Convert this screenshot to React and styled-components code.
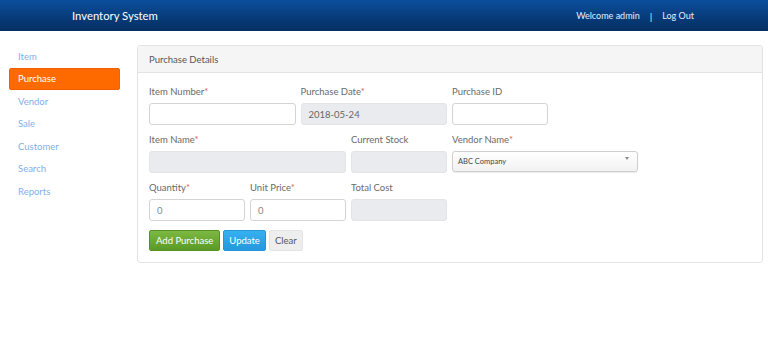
import React from "react";
import styled, { createGlobalStyle } from "styled-components";

const Global = createGlobalStyle`
  html, body { margin: 0; padding: 0; background: #fff; }
  body { font-family: Lato, "Open Sans", sans-serif; color: #555; }
  * { box-sizing: border-box; }
`;

const Header = styled.div`
  height: 31px;
  background: linear-gradient(to bottom, #0b4f9d 0%, #073a78 60%, #062f62 100%);
  display: flex;
  align-items: center;
  justify-content: space-between;
  padding: 0 74px 0 72px;
  color: #fff;
`;
const Brand = styled.div`
  font-size: 11.3px;
`;
const UserBar = styled.div`
  display: flex;
  align-items: center;
  gap: 10px;
  font-size: 9px;
  color: #e6eefa;
`;
const Sep = styled.span`
  font-size: 10px;
`;

const Body = styled.div`
  display: flex;
  padding: 14px 5px 0 9px;
  gap: 17px;
`;
const Side = styled.div`
  width: 111px;
  display: flex;
  flex-direction: column;
`;
const NavItem = styled.div`
  height: 22.5px;
  display: flex;
  align-items: center;
  padding-left: 8px;
  font-size: 9.5px;
  border-radius: 2px;
  color: ${p => (p.active ? "#fff" : "#7fb0ea")};
  background: ${p => (p.active ? "#ff6a00" : "transparent")};
  border: 1px solid ${p => (p.active ? "#f06000" : "transparent")};
`;

const Panel = styled.div`
  flex: 1;
  border: 1px solid #e3e3e3;
  border-radius: 3px;
  height: 218px;
`;
const PanelHead = styled.div`
  height: 27px;
  background: #f5f5f5;
  border-bottom: 1px solid #e3e3e3;
  display: flex;
  align-items: center;
  padding-left: 11px;
  font-size: 9.5px;
  color: #555;
`;
const PanelBody = styled.div`
  padding: 14px 11px 0 11px;
`;
const Grid = styled.div`
  display: grid;
  grid-template-columns: repeat(12, 45.5px);
  column-gap: 5px;
  row-gap: 10px;
`;
const Field = styled.div`
  grid-column: span ${p => p.span};
  display: flex;
  flex-direction: column;
`;
const Label = styled.div`
  font-size: 9.5px;
  color: #6a6a6a;
  height: 10px;
  line-height: 10px;
  margin-bottom: 6px;
`;
const Req = styled.span`
  color: #e0605a;
`;
const Input = styled.div`
  height: 22px;
  width: 100%;
  border: 1px solid ${p => (p.disabled ? "#e2e4e7" : "#d4d4d4")};
  border-radius: 3px;
  background: ${p => (p.disabled ? "#e9ebee" : "#fff")};
  font-size: 9.5px;
  color: ${p => (p.disabled ? "#666" : "#888")};
  display: flex;
  align-items: center;
  padding-left: 7px;
`;
const Select = styled.div`
  height: 21px;
  width: 186px;
  border: 1px solid #cfcfcf;
  border-radius: 3px;
  background: linear-gradient(to bottom, #fff, #f2f2f2);
  box-shadow: 0 1px 1px rgba(0, 0, 0, 0.08);
  font-size: 7.5px;
  color: #444;
  display: flex;
  align-items: center;
  justify-content: space-between;
  padding: 0 8px 0 5px;
`;
const Caret = styled.span`
  width: 0;
  height: 0;
  border-left: 2px solid transparent;
  border-right: 2px solid transparent;
  border-top: 3px solid #888;
  margin-top: -6px;
`;
const Actions = styled.div`
  display: flex;
  gap: 3px;
  margin-top: 9px;
`;
const Button = styled.div`
  height: 21px;
  padding: 0 ${p => p.px}px;
  border-radius: 2px;
  display: flex;
  align-items: center;
  font-size: 9.5px;
  color: ${p => (p.kind === "default" ? "#555" : "#fff")};
  background: ${p =>
    p.kind === "success"
      ? "linear-gradient(to bottom, #7cb843, #5a9a26)"
      : p.kind === "info"
      ? "linear-gradient(to bottom, #36b0ef, #2498dd)"
      : "#eeeeee"};
  border: 1px solid
    ${p => (p.kind === "success" ? "#55921f" : p.kind === "info" ? "#2395d8" : "#e4e4e4")};
`;

const nav = ["Item", "Purchase", "Vendor", "Sale", "Customer", "Search", "Reports"];

const L = ({ text, req }) => (
  <Label>
    {text}
    {req && <Req>*</Req>}
  </Label>
);

export default function App() {
  return (
    <>
      <Global />
      <Header>
        <Brand>Inventory System</Brand>
        <UserBar>
          <span>Welcome admin</span>
          <Sep>|</Sep>
          <span>Log Out</span>
        </UserBar>
      </Header>
      <Body>
        <Side>
          {nav.map(n => (
            <NavItem key={n} active={n === "Purchase"}>
              {n}
            </NavItem>
          ))}
        </Side>
        <Panel>
          <PanelHead>Purchase Details</PanelHead>
          <PanelBody>
            <Grid>
              <Field span={3}>
                <L text="Item Number" req />
                <Input />
              </Field>
              <Field span={3}>
                <L text="Purchase Date" req />
                <Input disabled>2018-05-24</Input>
              </Field>
              <Field span={2}>
                <L text="Purchase ID" />
                <Input />
              </Field>
              <Field span={4} />

              <Field span={4}>
                <L text="Item Name" req />
                <Input disabled />
              </Field>
              <Field span={2}>
                <L text="Current Stock" />
                <Input disabled />
              </Field>
              <Field span={4}>
                <L text="Vendor Name" req />
                <Select>
                  <span>ABC Company</span>
                  <Caret />
                </Select>
              </Field>
              <Field span={2} />

              <Field span={2}>
                <L text="Quantity" req />
                <Input>0</Input>
              </Field>
              <Field span={2}>
                <L text="Unit Price" req />
                <Input>0</Input>
              </Field>
              <Field span={2}>
                <L text="Total Cost" />
                <Input disabled />
              </Field>
            </Grid>
            <Actions>
              <Button kind="success" px={6}>Add Purchase</Button>
              <Button kind="info" px={5}>Update</Button>
              <Button kind="default" px={5}>Clear</Button>
            </Actions>
          </PanelBody>
        </Panel>
      </Body>
    </>
  );
}
